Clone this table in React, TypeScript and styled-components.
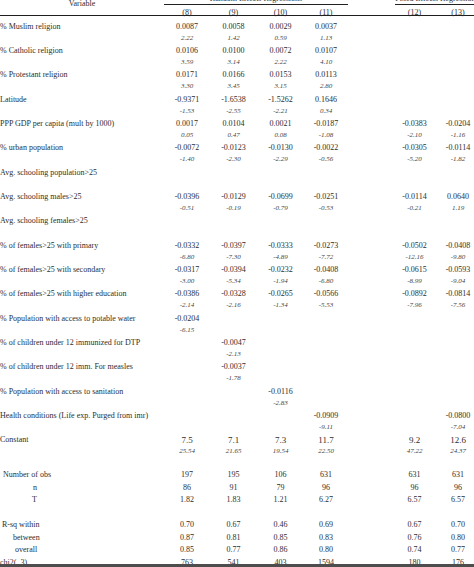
import React from 'react';
import styled, { createGlobalStyle } from 'styled-components';

const COLS = '164px 46px 47px 47px 44px 44px 45px 42px';

const GlobalStyle = createGlobalStyle`
  html, body {
    margin: 0;
    padding: 0;
    background: #ffffff;
  }
  body {
    width: 474px;
    height: 567px;
    overflow: hidden;
    font-family: "Liberation Serif", "Times New Roman", serif;
    color: #2e2e2e;
  }
`;

const Table = styled.div`
  margin-top: -6px;
  width: 474px;
`;

const GroupHead = styled.div`
  display: grid;
  grid-template-columns: ${COLS};
  grid-template-rows: 11px;
  font-size: 8px;
`;

const VariableHead = styled.div`
  grid-column: 1;
  text-align: center;
  line-height: 10px;
  padding-top: 5px;
`;

const GroupTitle = styled.div<{ $cols: string; $inset?: number }>`
  grid-column: ${(p) => p.$cols};
  margin-left: ${(p) => p.$inset || 0}px;
  text-align: center;
  line-height: 10px;
  border-bottom: 1px solid #222;
  white-space: nowrap;
`;

const ColHeadRow = styled.div`
  display: grid;
  grid-template-columns: ${COLS};
  height: 10px;
  border-bottom: 1.5px solid #1e1e1e;
  font-size: 8px;
  line-height: 16px;
  margin-bottom: 4.5px;
`;

const ColLabel = styled.div`
  text-align: center;
  white-space: nowrap;
`;

const Block = styled.div`
  padding-bottom: 2.35px;
`;

const Row = styled.div<{ $h: number; $lh?: number }>`
  display: grid;
  grid-template-columns: ${COLS};
  height: ${(p) => p.$h}px;
  line-height: ${(p) => p.$lh || p.$h}px;
  align-items: start;
`;

const Label = styled.div<{ $indent?: number }>`
  font-size: 8px;
  padding-left: ${(p) => p.$indent || 0}px;
  white-space: nowrap;
`;

const Value = styled.div<{ $size?: number }>`
  font-size: ${(p) => p.$size || 8}px;
  text-align: center;
  white-space: nowrap;
`;

const TStat = styled.div`
  font-size: 7px;
  font-style: italic;
  text-align: center;
  color: #454545;
  white-space: nowrap;
`;

const Gap = styled.div<{ $h: number }>`
  height: ${(p) => p.$h}px;
`;

const BottomRule = styled.div`
  position: relative;
  height: 4px;
  background: #4d4d4d;
`;

type Cell = string | null;
type Variable = { label: string; v: Cell[]; t: Cell[] };

const variables: Variable[] = [
  { label: '% Muslim religion', v: ['0.0087', '0.0058', '0.0029', '0.0037', null, null], t: ['2.22', '1.42', '0.59', '1.13', null, null] },
  { label: '% Catholic religion', v: ['0.0106', '0.0100', '0.0072', '0.0107', null, null], t: ['3.59', '3.14', '2.22', '4.10', null, null] },
  { label: '% Protestant religion', v: ['0.0171', '0.0166', '0.0153', '0.0113', null, null], t: ['3.30', '3.45', '3.15', '2.80', null, null] },
  { label: 'Latitude', v: ['-0.9371', '-1.6538', '-1.5262', '0.1646', null, null], t: ['-1.53', '-2.55', '-2.21', '0.34', null, null] },
  { label: 'PPP GDP per capita (mult by 1000)', v: ['0.0017', '0.0104', '0.0021', '-0.0187', '-0.0383', '-0.0204'], t: ['0.05', '0.47', '0.08', '-1.08', '-2.10', '-1.16'] },
  { label: '% urban population', v: ['-0.0072', '-0.0123', '-0.0130', '-0.0022', '-0.0305', '-0.0114'], t: ['-1.40', '-2.30', '-2.29', '-0.56', '-5.20', '-1.82'] },
  { label: 'Avg. schooling population>25', v: [null, null, null, null, null, null], t: [null, null, null, null, null, null] },
  { label: 'Avg. schooling males>25', v: ['-0.0396', '-0.0129', '-0.0699', '-0.0251', '-0.0114', '0.0640'], t: ['-0.51', '-0.19', '-0.79', '-0.53', '-0.21', '1.19'] },
  { label: 'Avg. schooling females>25', v: [null, null, null, null, null, null], t: [null, null, null, null, null, null] },
  { label: '% of females>25 with primary', v: ['-0.0332', '-0.0397', '-0.0333', '-0.0273', '-0.0502', '-0.0408'], t: ['-6.80', '-7.30', '-4.89', '-7.72', '-12.16', '-9.80'] },
  { label: '% of females>25 with secondary', v: ['-0.0317', '-0.0394', '-0.0232', '-0.0408', '-0.0615', '-0.0593'], t: ['-3.00', '-5.34', '-1.94', '-6.80', '-8.99', '-9.04'] },
  { label: '% of females>25 with higher education', v: ['-0.0386', '-0.0328', '-0.0265', '-0.0566', '-0.0892', '-0.0814'], t: ['-2.14', '-2.16', '-1.34', '-5.53', '-7.96', '-7.56'] },
  { label: '% Population with access to potable water', v: ['-0.0204', null, null, null, null, null], t: ['-6.15', null, null, null, null, null] },
  { label: '% of children under 12 immunized for DTP', v: [null, '-0.0047', null, null, null, null], t: [null, '-2.13', null, null, null, null] },
  { label: '% of children under 12 imm. For measles', v: [null, '-0.0037', null, null, null, null], t: [null, '-1.78', null, null, null, null] },
  { label: '% Population with access to sanitation', v: [null, null, '-0.0116', null, null, null], t: [null, null, '-2.83', null, null, null] },
  { label: 'Health conditions (Life exp. Purged from imr)', v: [null, null, null, '-0.0909', null, '-0.0800'], t: [null, null, null, '-9.11', null, '-7.04'] },
  { label: 'Constant', v: ['7.5', '7.1', '7.3', '11.7', '9.2', '12.6'], t: ['25.54', '21.65', '19.54', '22.50', '47.22', '24.37'] },
];

type Stat = { label: string; indent: number; v: string[] } | null;

const stats: Stat[] = [
  { label: 'Number of obs', indent: 3, v: ['197', '195', '106', '631', '631', '631'] },
  { label: 'n', indent: 33, v: ['86', '91', '79', '96', '96', '96'] },
  { label: 'T', indent: 32, v: ['1.82', '1.83', '1.21', '6.27', '6.57', '6.57'] },
  null,
  { label: 'R-sq within', indent: 2, v: ['0.70', '0.67', '0.46', '0.69', '0.67', '0.70'] },
  { label: 'between', indent: 13, v: ['0.87', '0.81', '0.85', '0.83', '0.76', '0.80'] },
  { label: 'overall', indent: 15, v: ['0.85', '0.77', '0.86', '0.80', '0.74', '0.77'] },
];

const colNames = ['(8)', '(9)', '(10)', '(11)', '(12)', '(13)'];

// random effects in the first four columns, then a spacer, then fixed effects
const withSpacer = <T,>(list: T[]): (T | 'gap')[] => [
  ...list.slice(0, 4),
  'gap',
  ...list.slice(4),
];

const App: React.FC = () => {
  return (
    <>
      <GlobalStyle />
      <Table>
        <GroupHead>
          <VariableHead>Variable</VariableHead>
          <GroupTitle $cols="2 / 6">Random Effects Regressions</GroupTitle>
          <GroupTitle $cols="7 / 9" $inset={3}>
            Fixed Effects Regressions
          </GroupTitle>
        </GroupHead>
        <ColHeadRow>
          <div />
          {withSpacer(colNames).map((c, i) => (
            <ColLabel key={i}>{c === 'gap' ? '' : c}</ColLabel>
          ))}
        </ColHeadRow>

        {variables.map((row) => {
          const big = row.label === 'Constant';
          return (
            <Block key={row.label}>
              <Row $h={12}>
                <Label>{row.label}</Label>
                {withSpacer(row.v).map((c, i) => (
                  <Value key={i} $size={big ? 9 : 8}>
                    {c === 'gap' ? '' : c}
                  </Value>
                ))}
              </Row>
              <Row $h={10}>
                <div />
                {withSpacer(row.t).map((c, i) => (
                  <TStat key={i}>{c === 'gap' ? '' : c}</TStat>
                ))}
              </Row>
            </Block>
          );
        })}

        <Gap $h={10.5} />
        {stats.map((s, idx) =>
          s ? (
            <Row $h={12.5} key={s.label}>
              <Label $indent={s.indent}>{s.label}</Label>
              {withSpacer(s.v).map((c, i) => (
                <Value key={i}>{c === 'gap' ? '' : c}</Value>
              ))}
            </Row>
          ) : (
            <Gap $h={12.5} key={'gap' + idx} />
          ),
        )}
        <Row $h={7} $lh={12.5}>
          <Label>chi2(&nbsp;&nbsp;3)</Label>
          {withSpacer(['763', '541', '403', '1594', '180', '176']).map((c, i) => (
            <Value key={i}>{c === 'gap' ? '' : c}</Value>
          ))}
        </Row>
        <BottomRule />
      </Table>
    </>
  );
};

export default App;
